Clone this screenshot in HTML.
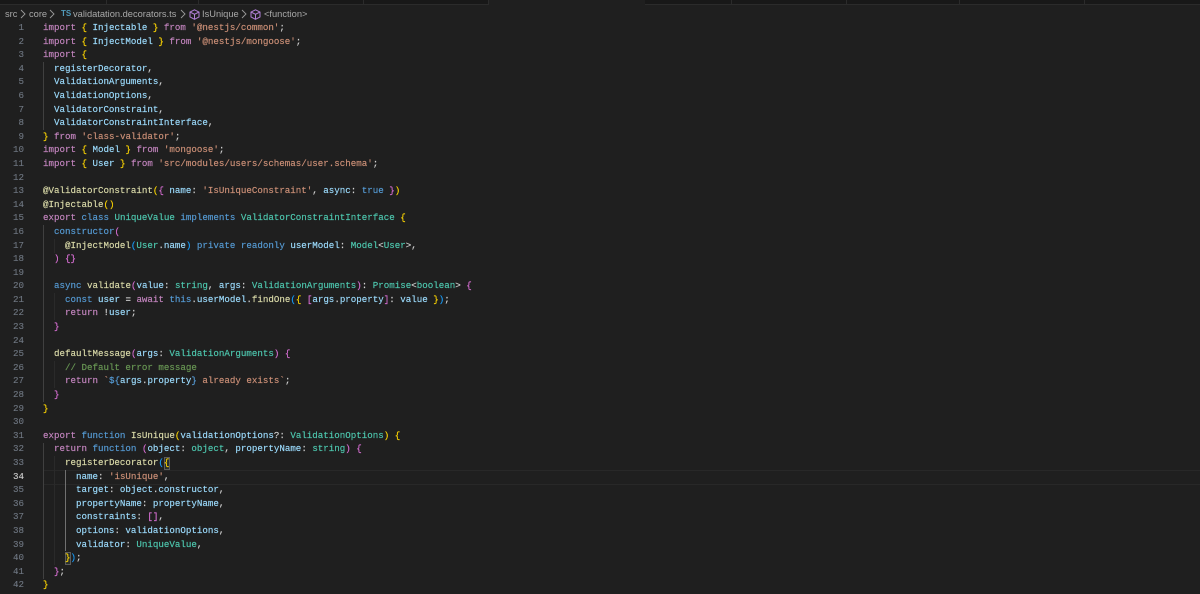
<!DOCTYPE html>
<html lang="en">
<head>
<meta charset="utf-8">
<title>validatation.decorators.ts</title>
<style>
html,body{margin:0;padding:0;background:#1f1f1f;}
html{width:1200px;height:594px;overflow:hidden;}
body{width:1200px;height:594px;overflow:hidden;position:relative;}
#strip{position:absolute;left:0;top:0;width:1200px;height:5px;}
#strip b{position:absolute;top:0;height:4px;background:#181818;border-bottom:1px solid #2b2b2b;border-right:1px solid #2b2b2b;box-sizing:content-box;}
#crumb{position:absolute;left:0;top:7px;height:14px;font:9.3px/14px "Liberation Sans",sans-serif;color:#a9a9a9;}
#crumb span{position:absolute;top:0;white-space:nowrap;}
#crumb svg{position:absolute;}
#nums{position:absolute;left:0;top:21px;width:24px;text-align:right;font:9.17px/13.6px "Liberation Mono",monospace;color:#6e7681;-webkit-text-stroke:.12px;filter:blur(.2px);}
#nums div{height:13.6px;}
#code{position:absolute;left:43px;top:21px;font:9.17px/13.6px "Liberation Mono",monospace;color:#9cdcfe;white-space:normal;-webkit-text-stroke:.15px;filter:blur(.2px);}
#code div{height:13.6px;white-space:pre;}
.g{position:absolute;width:1px;background:#404040;}
.a{background:#707070;}
.f54{background:#2a2a2a;}
#cur{position:absolute;left:43px;top:470px;width:1157px;height:13px;border-top:1px solid #282828;border-bottom:1px solid #282828;}
.bx{position:absolute;width:6px;height:13px;border:1px solid #5c5c5c;box-sizing:border-box;background:#2a2f2a;}
.k{color:#c586c0}.c{color:#569cd6}.s{color:#ce9178}.t{color:#4ec9b0}.f{color:#dcdcaa}.y{color:#ffd700}.p{color:#da70d6}.b{color:#179fff}.w{color:#d4d4d4}.m{color:#6a9955}
</style>
</head>
<body>
<div id="strip">
<b style="left:0;width:106px"></b><b style="left:107px;width:91px"></b><b style="left:199px;width:164px"></b><b style="left:364px;width:124px"></b>
<b style="left:645px;width:86px"></b><b style="left:732px;width:114px"></b><b style="left:847px;width:112px"></b><b style="left:960px;width:124px"></b><b style="left:1085px;width:115px"></b>
</div>
<div id="cur"></div>
<div class="g" style="left:43px;top:62px;height:68px"></div>
<div class="g" style="left:43px;top:225px;height:177px"></div>
<div class="g" style="left:43px;top:443px;height:136px"></div>
<div class="g f54" style="left:54px;top:239px;height:14px"></div>
<div class="g f54" style="left:54px;top:293px;height:27px"></div>
<div class="g f54" style="left:54px;top:361px;height:27px"></div>
<div class="g f54" style="left:54px;top:456px;height:109px"></div>
<div class="g a" style="left:65px;top:470px;height:81px"></div>
<div class="bx" style="left:164px;top:457px"></div>
<div class="bx" style="left:65px;top:552px"></div>
<div id="crumb">
<span style="left:5px">src</span>
<svg style="left:20px;top:2px" width="6" height="10" viewBox="0 0 6 10" fill="none" stroke="#9a9a9a" stroke-width=".9"><path d="M1 1l4 4-4 4"/></svg>
<span style="left:29px">core</span>
<svg style="left:49px;top:2px" width="6" height="10" viewBox="0 0 6 10" fill="none" stroke="#9a9a9a" stroke-width=".9"><path d="M1 1l4 4-4 4"/></svg>
<span style="left:61px;color:#519aba;font-weight:bold;font-size:8px">TS</span>
<span style="left:73px">validatation.decorators.ts</span>
<svg style="left:180px;top:2px" width="6" height="10" viewBox="0 0 6 10" fill="none" stroke="#9a9a9a" stroke-width=".9"><path d="M1 1l4 4-4 4"/></svg>
<svg style="left:188.500px;top:1.500px" width="11" height="11" viewBox="0 0 11 11" fill="none" stroke="#b180d7" stroke-width="1"><path d="M5.500 .8 10 3v5l-4.500 2.300L1 8V3zM1 3l4.500 2.300L10 3M5.500 5.300v5"/></svg>
<span style="left:202px">IsUnique</span>
<svg style="left:241px;top:2px" width="6" height="10" viewBox="0 0 6 10" fill="none" stroke="#9a9a9a" stroke-width=".9"><path d="M1 1l4 4-4 4"/></svg>
<svg style="left:249.500px;top:1.500px" width="11" height="11" viewBox="0 0 11 11" fill="none" stroke="#b180d7" stroke-width="1"><path d="M5.500 .8 10 3v5l-4.500 2.300L1 8V3zM1 3l4.500 2.300L10 3M5.500 5.300v5"/></svg>
<span style="left:264px">&lt;function&gt;</span>
</div>
<div id="nums"><div>1</div><div>2</div><div>3</div><div>4</div><div>5</div><div>6</div><div>7</div><div>8</div><div>9</div><div>10</div><div>11</div><div>12</div><div>13</div><div>14</div><div>15</div><div>16</div><div>17</div><div>18</div><div>19</div><div>20</div><div>21</div><div>22</div><div>23</div><div>24</div><div>25</div><div>26</div><div>27</div><div>28</div><div>29</div><div>30</div><div>31</div><div>32</div><div>33</div><div style="color:#ccc">34</div><div>35</div><div>36</div><div>37</div><div>38</div><div>39</div><div>40</div><div>41</div><div>42</div></div>
<div id="code">
<div><span class="k">import</span> <span class="y">{</span> Injectable <span class="y">}</span> <span class="k">from</span> <span class="s">'@nestjs/common'</span><span class="w">;</span></div>
<div><span class="k">import</span> <span class="y">{</span> InjectModel <span class="y">}</span> <span class="k">from</span> <span class="s">'@nestjs/mongoose'</span><span class="w">;</span></div>
<div><span class="k">import</span> <span class="y">{</span></div>
<div>  registerDecorator<span class="w">,</span></div>
<div>  ValidationArguments<span class="w">,</span></div>
<div>  ValidationOptions<span class="w">,</span></div>
<div>  ValidatorConstraint<span class="w">,</span></div>
<div>  ValidatorConstraintInterface<span class="w">,</span></div>
<div><span class="y">}</span> <span class="k">from</span> <span class="s">'class-validator'</span><span class="w">;</span></div>
<div><span class="k">import</span> <span class="y">{</span> Model <span class="y">}</span> <span class="k">from</span> <span class="s">'mongoose'</span><span class="w">;</span></div>
<div><span class="k">import</span> <span class="y">{</span> User <span class="y">}</span> <span class="k">from</span> <span class="s">'src/modules/users/schemas/user.schema'</span><span class="w">;</span></div>
<div> </div>
<div><span class="f">@ValidatorConstraint</span><span class="y">(</span><span class="p">{</span> name<span class="w">:</span> <span class="s">'IsUniqueConstraint'</span><span class="w">,</span> async<span class="w">:</span> <span class="c">true</span> <span class="p">}</span><span class="y">)</span></div>
<div><span class="f">@Injectable</span><span class="y">()</span></div>
<div><span class="k">export</span> <span class="c">class</span> <span class="t">UniqueValue</span> <span class="c">implements</span> <span class="t">ValidatorConstraintInterface</span> <span class="y">{</span></div>
<div>  <span class="c">constructor</span><span class="p">(</span></div>
<div>    <span class="f">@InjectModel</span><span class="b">(</span><span class="t">User</span><span class="w">.</span>name<span class="b">)</span> <span class="c">private</span> <span class="c">readonly</span> userModel<span class="w">:</span> <span class="t">Model</span><span class="w">&lt;</span><span class="t">User</span><span class="w">&gt;,</span></div>
<div>  <span class="p">)</span> <span class="p">{}</span></div>
<div> </div>
<div>  <span class="c">async</span> <span class="f">validate</span><span class="p">(</span>value<span class="w">:</span> <span class="t">string</span><span class="w">,</span> args<span class="w">:</span> <span class="t">ValidationArguments</span><span class="p">)</span><span class="w">:</span> <span class="t">Promise</span><span class="w">&lt;</span><span class="t">boolean</span><span class="w">&gt;</span> <span class="p">{</span></div>
<div>    <span class="c">const</span> user <span class="w">=</span> <span class="k">await</span> <span class="c">this</span><span class="w">.</span>userModel<span class="w">.</span><span class="f">findOne</span><span class="b">(</span><span class="y">{</span> <span class="p">[</span>args<span class="w">.</span>property<span class="p">]</span><span class="w">:</span> value <span class="y">}</span><span class="b">)</span><span class="w">;</span></div>
<div>    <span class="k">return</span> <span class="w">!</span>user<span class="w">;</span></div>
<div>  <span class="p">}</span></div>
<div> </div>
<div>  <span class="f">defaultMessage</span><span class="p">(</span>args<span class="w">:</span> <span class="t">ValidationArguments</span><span class="p">)</span> <span class="p">{</span></div>
<div>    <span class="m">// Default error message</span></div>
<div>    <span class="k">return</span> <span class="s">`</span><span class="c">${</span>args<span class="w">.</span>property<span class="c">}</span><span class="s"> already exists`</span><span class="w">;</span></div>
<div>  <span class="p">}</span></div>
<div><span class="y">}</span></div>
<div> </div>
<div><span class="k">export</span> <span class="c">function</span> <span class="f">IsUnique</span><span class="y">(</span>validationOptions<span class="w">?:</span> <span class="t">ValidationOptions</span><span class="y">)</span> <span class="y">{</span></div>
<div>  <span class="k">return</span> <span class="c">function</span> <span class="p">(</span>object<span class="w">:</span> <span class="t">object</span><span class="w">,</span> propertyName<span class="w">:</span> <span class="t">string</span><span class="p">)</span> <span class="p">{</span></div>
<div>    <span class="f">registerDecorator</span><span class="b">(</span><span class="y">{</span></div>
<div>      name<span class="w">:</span> <span class="s">'isUnique'</span><span class="w">,</span></div>
<div>      target<span class="w">:</span> object<span class="w">.</span>constructor<span class="w">,</span></div>
<div>      propertyName<span class="w">:</span> propertyName<span class="w">,</span></div>
<div>      constraints<span class="w">:</span> <span class="p">[]</span><span class="w">,</span></div>
<div>      options<span class="w">:</span> validationOptions<span class="w">,</span></div>
<div>      validator<span class="w">:</span> <span class="t">UniqueValue</span><span class="w">,</span></div>
<div>    <span class="y">}</span><span class="b">)</span><span class="w">;</span></div>
<div>  <span class="p">}</span><span class="w">;</span></div>
<div><span class="y">}</span></div>
</div>
</body>
</html>
